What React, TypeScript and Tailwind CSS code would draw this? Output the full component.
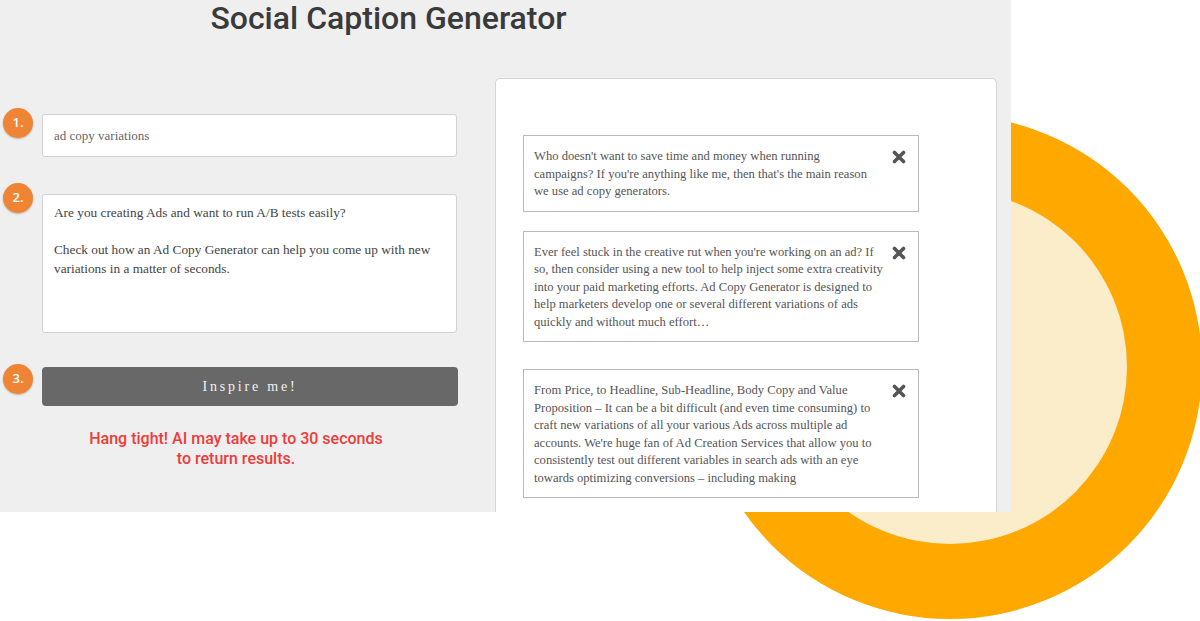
const captions = [
  [
    "Who doesn't want to save time and money when running",
    "campaigns? If you're anything like me, then that's the main reason",
    "we use ad copy generators.",
  ],
  [
    "Ever feel stuck in the creative rut when you're working on an ad? If",
    "so, then consider using a new tool to help inject some extra creativity",
    "into your paid marketing efforts. Ad Copy Generator is designed to",
    "help marketers develop one or several different variations of ads",
    "quickly and without much effort…",
  ],
  [
    "From Price, to Headline, Sub-Headline, Body Copy and Value",
    "Proposition – It can be a bit difficult (and even time consuming) to",
    "craft new variations of all your various Ads across multiple ad",
    "accounts. We're huge fan of Ad Creation Services that allow you to",
    "consistently test out different variables in search ads with an eye",
    "towards optimizing conversions – including making",
  ],
];

function Badge({ n }: { n: number }) {
  return (
    <div className="ml-[3px] flex h-[30px] w-[30px] shrink-0 items-center justify-center rounded-full bg-[#ef8534] font-['Open_Sans',sans-serif] text-[13px] font-semibold text-white shadow-[0_1px_2px_rgba(0,0,0,0.25)]">
      {n}.
    </div>
  );
}

function CloseIcon() {
  return (
    <svg width="14" height="14" viewBox="0 0 14 14" className="shrink-0">
      <path
        d="M2.5 2.5 L11.5 11.5 M11.5 2.5 L2.5 11.5"
        stroke="#555"
        strokeWidth="3.6"
        strokeLinecap="round"
      />
    </svg>
  );
}

export default function App() {
  return (
    <div className="relative h-[621px] w-[1200px] overflow-hidden bg-white">
      {/* decorative ring behind the screenshot */}
      <div className="absolute top-[115px] left-[698px] h-[504px] w-[504px] rounded-full bg-[#fea800]" />
      <div className="absolute top-[190px] left-[773px] h-[354px] w-[354px] rounded-full bg-[#fbecca]" />

      <div className="relative z-10 h-[512px] w-[1011px] overflow-hidden bg-[#efefef]">
        {/* Header */}
        <div className="h-[78px] w-[777px] text-center font-['Roboto',sans-serif] text-[32px] leading-[36px] font-medium text-[#3a3a3a]">
          Social Caption Generator
        </div>

        <div className="flex">
          {/* Left column */}
          <div className="w-[495px] shrink-0 pt-[30px]">
            <div className="flex items-start">
              <Badge n={1} />
              <div className="mt-[6px] ml-[9px] flex h-[43px] w-[415px] items-center rounded-[3px] border border-[#d2d2d2] bg-white px-[11px] font-['Liberation_Serif',serif] text-[13px] text-[#666]">
                ad copy variations
              </div>
            </div>

            <div className="mt-[26px] flex items-start">
              <Badge n={2} />
              <div className="mt-[11px] ml-[9px] h-[139px] w-[415px] rounded-[3px] border border-[#d2d2d2] bg-white px-[11px] pt-[9px] font-['Liberation_Serif',serif] text-[13.3px] leading-[18.5px] text-[#444]">
                <div>Are you creating Ads and want to run A/B tests easily?</div>
                <div className="h-[18.5px]" />
                <div>Check out how an Ad Copy Generator can help you come up with new</div>
                <div>variations in a matter of seconds.</div>
              </div>
            </div>

            <div className="mt-[31px] flex items-start">
              <Badge n={3} />
              <button className="mt-[3px] ml-[9px] flex h-[39px] w-[416px] items-center justify-center rounded-[4px] bg-[#686868] font-['Liberation_Serif',serif] text-[14px] tracking-[2.8px] text-[#f2f2f2]">
                Inspire me!
              </button>
            </div>

            <div className="mt-[23px] w-[472px] text-center font-['Roboto',sans-serif] text-[16px] leading-[20px] font-medium text-[#ee3b3b]">
              Hang tight! AI may take up to 30 seconds
              <br />
              to return results.
            </div>
          </div>

          {/* Results card */}
          <div className="h-[460px] w-[502px] shrink-0 rounded-t-[5px] border border-[#d4d4d4] bg-white pt-[56px] pl-[27px]">
            {captions.map((lines, i) => (
              <div
                key={i}
                className={`flex w-[396px] justify-between border border-[#b9b9b9] bg-white pt-[12px] pr-[12px] pb-[10px] pl-[10px] ${
                  i === 1 ? "mt-[19px]" : i === 2 ? "mt-[27px]" : ""
                }`}
              >
                <div className="font-['Liberation_Serif',serif] text-[12.6px] leading-[17.5px] whitespace-nowrap text-[#555]">
                  {lines.map((l) => (
                    <div key={l}>{l}</div>
                  ))}
                </div>
                <div className="pt-[2px]">
                  <CloseIcon />
                </div>
              </div>
            ))}
          </div>
        </div>
      </div>
    </div>
  );
}
